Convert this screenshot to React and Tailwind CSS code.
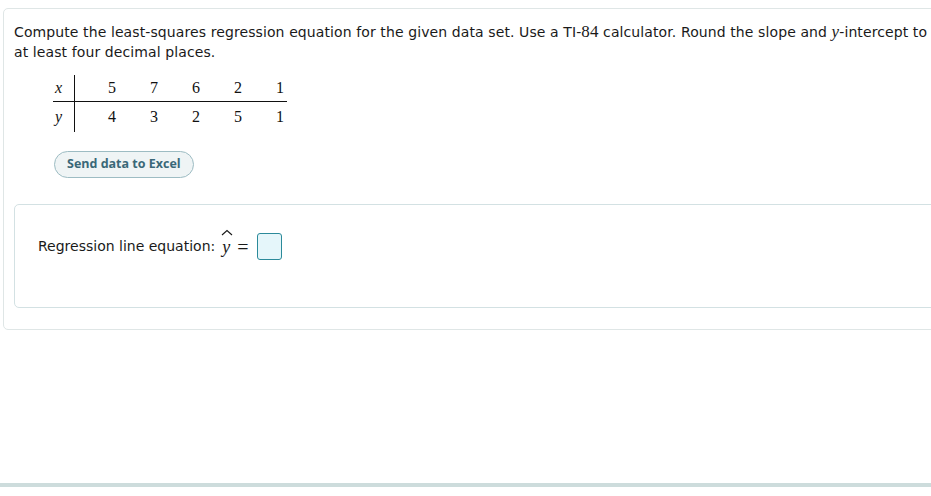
import React from 'react'

const xs = [5, 7, 6, 2, 1]
const ys = [4, 3, 2, 5, 1]

export default function App() {
  return (
    <div className="w-[931px] h-[496px] bg-white relative overflow-hidden" style={{ fontFamily: '"DejaVu Sans", Verdana, sans-serif' }}>
      <div className="pt-2 pl-[3px]">
        {/* question card */}
        <div className="w-[960px] h-[322px] border border-[#dfe6e6] rounded-[5px] pl-[10px] pt-[14px]">
          <p className="text-[14px] leading-[19.5px] tracking-[0.1px] text-[#1a1a1a] w-[920px]">
            {'Compute the least-squares regression equation for the given data set. Use a TI-'}
            <span className="text-[17px] leading-none" style={{ fontFamily: '"Liberation Serif", serif' }}>84</span>
            {' calculator. Round the slope and '}
            <i className="text-[17px] leading-none" style={{ fontFamily: '"Liberation Serif", serif' }}>y</i>
            {'-intercept to'}
            <br />
            {'at least four decimal places.'}
          </p>

          {/* data table */}
          <div className="mt-[13px] ml-[39px] w-[234px] text-[16px] text-[#111]" style={{ fontFamily: '"Liberation Serif", serif' }}>
            <div className="flex h-[27px] items-center border-b border-[#111]">
              <div className="w-[22px] pl-[2px] italic border-r border-[#111] h-full flex items-center">x</div>
              {xs.map((v, i) => (
                <div key={i} className="w-[42px] text-right pr-[1px]">{v}</div>
              ))}
            </div>
            <div className="flex h-[30px] items-center">
              <div className="w-[22px] pl-[2px] italic border-r border-[#111] h-full flex items-center">y</div>
              {ys.map((v, i) => (
                <div key={i} className="w-[42px] text-right pr-[1px]">{v}</div>
              ))}
            </div>
          </div>

          <button className="mt-[19px] ml-[40px] h-[27px] px-[12px] rounded-full border border-[#9dbcc3] bg-[#eff4f5] text-[12.5px] font-bold text-[#3a6878] leading-none" style={{ fontFamily: '"Open Sans", Lato, sans-serif' }}>
            Send data to Excel
          </button>

          {/* answer box */}
          <div className="mt-[26px] w-[960px] h-[104px] border border-[#d3e1e3] rounded-[5px] pl-[23px] pt-[28px]">
            <div className="flex items-center text-[14px] text-[#1a1a1a]">
              <span>Regression line equation:</span>
              <span className="relative ml-[7px] italic text-[18px] leading-none" style={{ fontFamily: '"Liberation Serif", serif' }}>
                y
                {/* hat accent */}
                <svg className="absolute left-[-1px] top-[-9px]" width="12" height="7" viewBox="0 0 12 7">
                  <path d="M1 6 L6 1.5 L11 6" fill="none" stroke="#1a1a1a" strokeWidth="1.1" />
                </svg>
              </span>
              <span className="ml-[7px] text-[20px] leading-none" style={{ fontFamily: '"Liberation Serif", serif' }}>=</span>
              <span className="ml-[8px] w-[25px] h-[27px] rounded-[3px] border border-[#2b8a9a] bg-[#e5f6fa]" />
            </div>
          </div>
        </div>
      </div>

      <div className="absolute left-0 right-0 top-[483px] h-[4px] bg-[#cddcdc]" />
    </div>
  )
}
